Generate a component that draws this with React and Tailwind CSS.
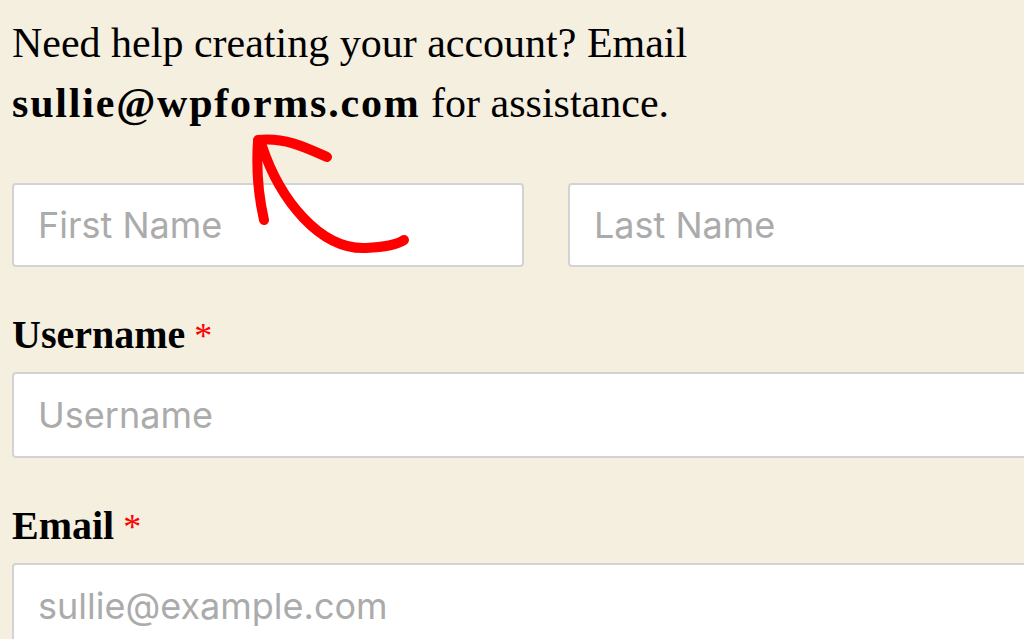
import React from 'react';

const serif = { fontFamily: '"Liberation Serif", "Times New Roman", serif' };

const inputCls =
  "block w-full rounded border-2 border-[#d3d3d3] bg-white px-[24px] text-[36px] text-black placeholder:text-[#ababab] outline-none font-['Inter',sans-serif]";

const Field = ({ label, placeholder }) => (
  <div className="mt-[44px]">
    <label className="block text-[40px] leading-[48px] font-bold text-black" style={serif}>
      {label}
      <span className="ml-[9px] text-[36px] font-normal text-[#ff0000]">*</span>
    </label>
    <input type="text" placeholder={placeholder} className={`mt-[12px] h-[86px] ${inputCls}`} />
  </div>
);

// hand-drawn red arrow pointing at the email address
const Arrow = () => (
  <svg
    className="absolute left-0 top-0 pointer-events-none"
    width="1024"
    height="639"
    viewBox="0 0 1024 639"
    fill="none"
  >
    <g stroke="#ff0000" strokeLinecap="round" strokeLinejoin="round">
      <path d="M262 146 C280 200 320 250 366 248 C386 247 398 244 404 240" strokeWidth="10" />
      <path d="M258 141 C256 170 259 198 264 220" strokeWidth="10" />
      <path d="M258 140 C284 137 305 147 327 157" strokeWidth="10" />
    </g>
  </svg>
);

export default function App() {
  return (
    <div className="relative w-[1024px] h-[639px] overflow-hidden bg-[#f5efdf]">
      <div className="w-[1080px] pl-[12px] pt-[13px]">
        <p className="text-[42px] leading-[60px] text-black" style={serif}>
          Need help creating your account? Email
          <br />
          <strong className="font-bold tracking-[1.8px]">sullie@wpforms.com</strong> for assistance.
        </p>

        <div className="mt-[50px] grid grid-cols-2 gap-[44px]">
          <input type="text" placeholder="First Name" className={`h-[84px] ${inputCls}`} />
          <input type="text" placeholder="Last Name" className={`h-[84px] ${inputCls}`} />
        </div>

        <Field label="Username" placeholder="Username" />
        <Field label="Email" placeholder="sullie@example.com" />
      </div>
      <Arrow />
    </div>
  );
}
